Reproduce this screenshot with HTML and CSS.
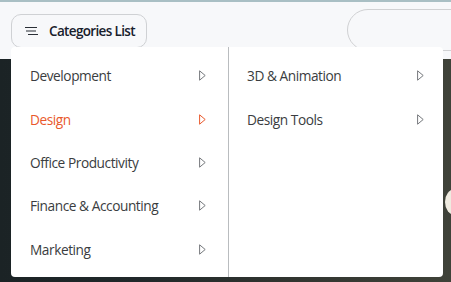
FILE: index.html
```html
<!DOCTYPE html>
<html>
<head>
<meta charset="utf-8">
<link rel="stylesheet" href="styles.css">
</head>
<body>
<header class="topbar">
  <button class="cat-btn">
    <svg class="cat-icon" width="14" height="10" viewBox="0 0 14 10"><path d="M0 1.5H12M1 5H11M3 8.5H13" stroke="#2a2f36" stroke-width="1.2" fill="none"/></svg>
    <span>Categories List</span>
  </button>
  <div class="search"></div>
</header>
<main class="hero">
  <div class="blob"></div>
</main>
<div class="menu">
  <ul class="panel main-panel">
    <li><span>Development</span><svg class="arr" width="7" height="11" viewBox="0 0 7 11"><path d="M0.6 0.8L6.2 5.5L0.6 10.2Z" fill="none" stroke="currentColor" stroke-width="1" stroke-linejoin="round"/></svg></li>
    <li class="active"><span>Design</span><svg class="arr" width="7" height="11" viewBox="0 0 7 11"><path d="M0.6 0.8L6.2 5.5L0.6 10.2Z" fill="none" stroke="currentColor" stroke-width="1" stroke-linejoin="round"/></svg></li>
    <li><span>Office Productivity</span><svg class="arr" width="7" height="11" viewBox="0 0 7 11"><path d="M0.6 0.8L6.2 5.5L0.6 10.2Z" fill="none" stroke="currentColor" stroke-width="1" stroke-linejoin="round"/></svg></li>
    <li><span>Finance &amp; Accounting</span><svg class="arr" width="7" height="11" viewBox="0 0 7 11"><path d="M0.6 0.8L6.2 5.5L0.6 10.2Z" fill="none" stroke="currentColor" stroke-width="1" stroke-linejoin="round"/></svg></li>
    <li><span>Marketing</span><svg class="arr" width="7" height="11" viewBox="0 0 7 11"><path d="M0.6 0.8L6.2 5.5L0.6 10.2Z" fill="none" stroke="currentColor" stroke-width="1" stroke-linejoin="round"/></svg></li>
  </ul>
  <ul class="panel sub-panel">
    <li><span>3D &amp; Animation</span><svg class="arr" width="7" height="11" viewBox="0 0 7 11"><path d="M0.6 0.8L6.2 5.5L0.6 10.2Z" fill="none" stroke="currentColor" stroke-width="1" stroke-linejoin="round"/></svg></li>
    <li><span>Design Tools</span><svg class="arr" width="7" height="11" viewBox="0 0 7 11"><path d="M0.6 0.8L6.2 5.5L0.6 10.2Z" fill="none" stroke="currentColor" stroke-width="1" stroke-linejoin="round"/></svg></li>
  </ul>
</div>
</body>
</html>
```
FILE: styles.css
```css
html, body {
  margin: 0;
  padding: 0;
  width: 451px;
  height: 282px;
  overflow: hidden;
  font-family: "Open Sans", "Noto Sans", sans-serif;
}
.topbar {
  height: 57px;
  border-top: 2px solid #a9bfc4;
  background: #f7f8fa;
  display: flex;
  align-items: flex-start;
  gap: 200px;
  box-sizing: content-box;
  overflow: hidden;
}
.cat-btn {
  margin: 12px 0 0 11px;
  width: 136px;
  height: 34px;
  flex: none;
  border: 1px solid #cfd1d4;
  border-radius: 10px;
  background: #f7f8fa;
  display: flex;
  align-items: center;
  gap: 10px;
  padding: 0 0 0 13px;
  font-family: inherit;
  font-size: 13.5px;
  font-weight: 600;
  letter-spacing: -0.65px;
  color: #18202c;
}
.search {
  margin-top: 7px;
  flex: none;
  width: 142px;
  height: 40px;
  border: 1px solid #d0d1d3;
  border-radius: 21px;
  background: #f7f8fa;
}
.hero {
  height: 223px;
  background: linear-gradient(90deg, #1b2325 0%, #20282a 30%, #2f332f 60%, #3f4239 100%);
  position: relative;
}
.blob {
  position: absolute;
  left: 445px;
  top: 130px;
  width: 20px;
  height: 26px;
  border-radius: 50%;
  background: #efebe0;
}
.menu {
  position: absolute;
  left: 11px;
  top: 47px;
  display: flex;
  height: 230px;
}
.panel {
  list-style: none;
  margin: 0;
  padding: 7px 0 0;
  background: #fff;
  box-sizing: border-box;
  height: 230px;
}
.main-panel {
  width: 218px;
  border-radius: 4px 0 0 4px;
  border-right: 1px solid #b9bcbf;
}
.sub-panel {
  width: 214px;
  border-radius: 0 4px 4px 0;
}
.panel li {
  height: 43.4px;
  display: flex;
  align-items: center;
  justify-content: space-between;
  font-size: 13.7px;
  letter-spacing: -0.45px;
  color: #3a3d40;
}
.main-panel li {
  padding: 0 22px 0 19px;
}
.sub-panel li {
  padding: 0 19px 0 18px;
}
.panel li.active {
  color: #e9592c;
}
.arr {
  color: #75787c;
}
.active .arr {
  color: #e9592c;
}
```
